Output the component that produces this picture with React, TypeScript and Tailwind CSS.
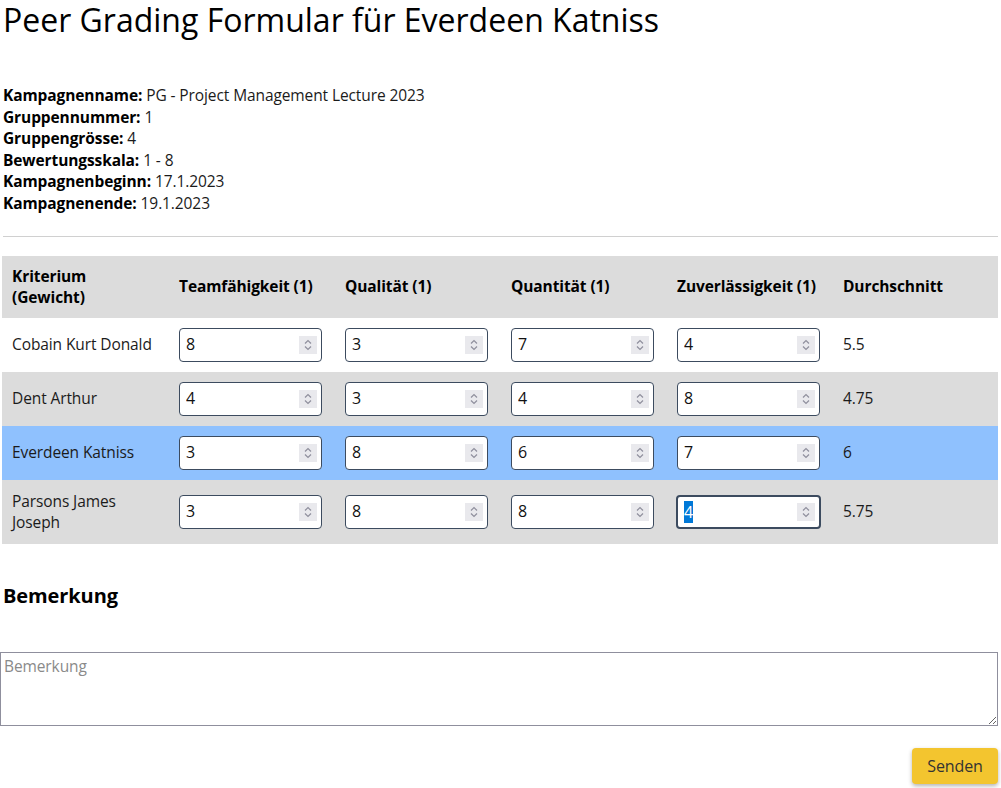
import React from "react";

const criteria = ["Teamfähigkeit (1)", "Qualität (1)", "Quantität (1)", "Zuverlässigkeit (1)"];

const rows = [
  { name: "Cobain Kurt Donald", values: ["8", "3", "7", "4"], avg: "5.5", bg: "bg-white" },
  { name: "Dent Arthur", values: ["4", "3", "4", "8"], avg: "4.75", bg: "bg-[#dcdcdc]" },
  { name: "Everdeen Katniss", values: ["3", "8", "6", "7"], avg: "6", bg: "bg-[#8fc1fe]" },
  { name: "Parsons James Joseph", values: ["3", "8", "8", "4"], avg: "5.75", bg: "bg-[#dcdcdc]" },
];

const info = [
  ["Kampagnenname:", "PG - Project Management Lecture 2023"],
  ["Gruppennummer:", "1"],
  ["Gruppengrösse:", "4"],
  ["Bewertungsskala:", "1 - 8"],
  ["Kampagnenbeginn:", "17.1.2023"],
  ["Kampagnenende:", "19.1.2023"],
];

function Spinner() {
  return (
    <span className="flex h-[18px] w-[18px] shrink-0 items-center justify-center bg-[#e9e9ed]">
      <svg width="10" height="14" viewBox="0 0 10 14" fill="none" stroke="#8f8f9d" strokeWidth="1.2">
        <path d="M2 5.5 L5 2.5 L8 5.5" />
        <path d="M2 8.5 L5 11.5 L8 8.5" />
      </svg>
    </span>
  );
}

function NumberField({ value, focused }: { value: string; focused?: boolean }) {
  return (
    <div
      className={
        focused
          ? "flex h-[34px] w-[145px] -ml-[1px] items-center rounded-[4px] border-2 border-[#3c4b5f] bg-white pl-[6px] pr-[4px]"
          : "flex h-[34px] w-[143px] items-center rounded-[4px] border border-[#3c4b5f] bg-white pl-[6px] pr-[4px]"
      }
    >
      {focused ? (
        <span className="flex-1 text-[16px] leading-none">
          <span className="bg-[#0078d7] text-white">{value}</span>
        </span>
      ) : (
        <input
          type="text"
          readOnly
          defaultValue={value}
          className="w-full min-w-0 flex-1 bg-transparent text-[16px] text-[#111] outline-none"
        />
      )}
      <Spinner />
    </div>
  );
}

export default function App() {
  return (
    <div
      className="min-h-[788px] bg-white text-[15.5px] tracking-[-0.1px] text-[#1b1b1b]"
      style={{ fontFamily: '"Open Sans", "Noto Sans", sans-serif' }}
    >
      {/* Title */}
      <h1 className="pl-[3px] text-[32px] font-normal leading-[40px] tracking-normal text-black">
        Peer Grading Formular für Everdeen Katniss
      </h1>

      {/* Campaign info */}
      <div className="mt-[45px] pl-[3px] leading-[21.6px]">
        {info.map(([label, value]) => (
          <div key={label}>
            <span className="font-bold text-black">{label}</span> {value}
          </div>
        ))}
      </div>

      <hr className="mx-[3px] mt-[21px] border-t border-[#d0d0d0]" />

      {/* Table */}
      <div className="mx-[2px] mt-[19px] w-[996px]">
        <div className="grid grid-cols-[168px_repeat(5,166px)] items-center bg-[#dcdcdc] font-bold leading-[21px] text-black">
          <div className="py-[10px] pl-[10px]">
            Kriterium
            <br />
            (Gewicht)
          </div>
          {criteria.map((c) => (
            <div key={c} className="pl-[9px]">
              {c}
            </div>
          ))}
          <div className="pl-[9px]">Durchschnitt</div>
        </div>

        {rows.map((row, ri) => (
          <div key={row.name} className={`grid grid-cols-[168px_repeat(5,166px)] items-center leading-[21px] ${row.bg}`}>
            <div className="py-[11px] pl-[10px] pr-[8px]">{ri === 3 ? <>Parsons James<br />Joseph</> : row.name}</div>
            {row.values.map((v, ci) => (
              <div key={ci} className="py-[10px] pl-[9px]">
                <NumberField value={v} focused={ri === 3 && ci === 3} />
              </div>
            ))}
            <div className="pl-[9px]">{row.avg}</div>
          </div>
        ))}
      </div>

      {/* Remark */}
      <h2 className="mt-[39px] pl-[3px] text-[20px] font-bold leading-[26px] text-black">Bemerkung</h2>

      <textarea
        placeholder="Bemerkung"
        className="mt-[43px] block h-[74px] w-[998px] rounded-none border border-[#8f8f9d] px-[3px] py-[2px] text-[15.5px] placeholder:text-[#8a8a8a]"
      />

      <div className="mt-[22px] flex justify-end pr-[3px]">
        <button className="h-[36px] w-[86px] rounded-[4px] bg-[#f3c52f] text-[16px] text-[#333] shadow-[0_2px_4px_rgba(0,0,0,0.3)]">
          Senden
        </button>
      </div>
    </div>
  );
}
